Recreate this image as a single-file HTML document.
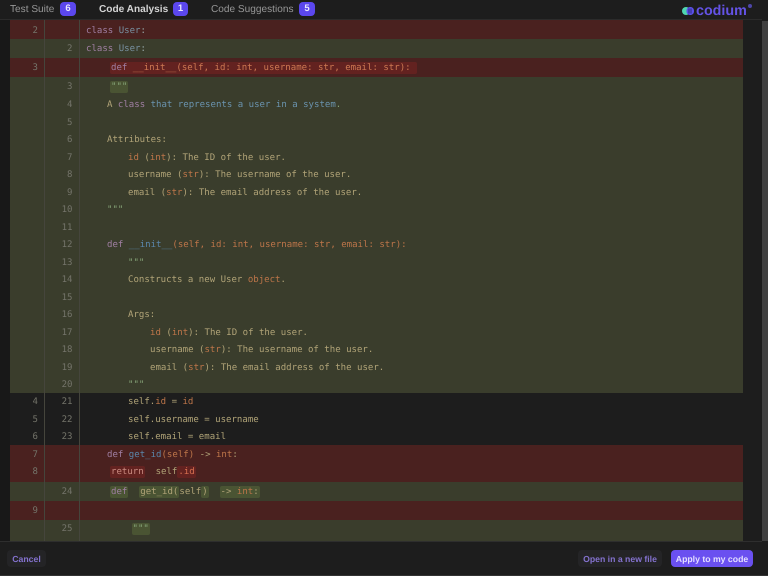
<!DOCTYPE html>
<html><head><meta charset="utf-8">
<style>
html,body{margin:0;padding:0;background:#1d1d1d;}
#p{position:relative;width:768px;height:576px;overflow:hidden;background:#1d1d1d;font-family:"Liberation Sans",sans-serif;filter:blur(.35px);text-rendering:geometricPrecision;}
.bg{position:absolute;left:10px;width:733px;}
.r{background:#4a211f}.g{background:#3a3d2c}
.l{position:absolute;left:0;margin-top:1px;height:18px;line-height:18px;font-family:"DejaVu Sans Mono",monospace;font-size:9.05px;color:#b0a377;white-space:pre;}
.n{color:#74746a;width:28px;text-align:right}
.a{left:10px}.b{left:44.5px}
.k{color:#a07fa3}.f{color:#5a86aa}.o{color:#bd7549}.w{color:#7890a0}.s{color:#86a478}.t{color:#6a93ae}
.hr{background:#632220;border-radius:2px;padding:1px;}
.hg{background:#4a5433;border-radius:2px;padding:1px;}
.tab{position:absolute;top:3px;font-size:10.1px;line-height:12px;color:#969696;white-space:nowrap}
.bd{position:absolute;top:2px;height:14px;background:#5b47ee;border-radius:4px;color:#e8e6ff;font-size:9.5px;font-weight:bold;line-height:14px;text-align:center}
.btn{position:absolute;top:550px;height:17px;line-height:18px;border-radius:4px;font-size:8.7px;text-align:center;font-weight:bold;white-space:nowrap}
</style></head><body><div id="p">

<div class="tab" style="left:10px;top:4px">Test Suite</div><div class="bd" style="left:60px;width:16px">6</div>
<div class="tab" style="left:99px;top:4px;color:#d4d4d4;font-weight:bold;">Code Analysis</div><div class="bd" style="left:173px;width:15px">1</div>
<div class="tab" style="left:211px;top:4px">Code Suggestions</div><div class="bd" style="left:299px;width:16px">5</div>
<div style="position:absolute;left:88px;top:18.5px;width:112px;height:1px;background:#5546c8"></div>
<div style="position:absolute;left:0;top:19px;width:762px;height:1px;background:#2b2b2b"></div>
<div style="position:absolute;left:0;top:20px;width:10px;height:521px;background:#181818"></div>

<svg style="position:absolute;left:682px;top:7px" width="13" height="9"><rect x="0" y="0" width="8" height="8" rx="4" fill="#4fd6b0"/><rect x="4.5" y="0" width="7.5" height="8" rx="3.5" fill="#5b50e8"/><rect x="6.5" y="1.5" width="1" height="5" fill="#2a2a7a"/><rect x="8.5" y="1.5" width="1" height="5" fill="#2a2a7a"/></svg>
<div style="position:absolute;left:696px;top:0.5px;font-size:14.3px;line-height:20px;font-weight:bold;color:#6453e6;">codium</div>
<div style="position:absolute;left:747.5px;top:3.5px;width:4px;height:4px;border-radius:50%;background:#4d46a8"></div>

<div style="position:absolute;left:762px;top:21px;width:6px;height:520px;background:#404040"></div>

<div class="bg r" style="top:20px;height:19px"></div>
<div class="bg g" style="top:39px;height:19px"></div>
<div class="bg r" style="top:58px;height:19px"></div>
<div class="bg g" style="top:77px;height:316px"></div>
<div class="bg r" style="top:445px;height:36.5px"></div>
<div class="bg g" style="top:481.5px;height:19px"></div>
<div class="bg r" style="top:500.5px;height:19px"></div>
<div class="bg g" style="top:519.5px;height:21.5px"></div>
<div style="position:absolute;left:44px;top:20px;width:1px;height:521px;background:#45453c"></div>
<div style="position:absolute;left:79px;top:20px;width:1px;height:521px;background:#45453c"></div>

<div class="l n a" style="top:21px">2</div><div class="l" style="left:86px;top:21px"><span class="k">class</span> <span class="w">User</span><span style="color:#9aa">:</span></div>
<div class="l n b" style="top:39px">2</div><div class="l" style="left:86px;top:39px"><span class="k">class</span> <span class="w">User</span><span style="color:#9aa">:</span></div>
<div class="l n a" style="top:58px">3</div><div class="l" style="left:110px;top:58px;color:#cc7852"><span class="hr" style="padding-right:6px"><span class="k">def</span> <span style="color:#cc7852">__init__</span>(self, id: int, username: str, email: str):</span></div>
<div class="l n b" style="top:77px">3</div><div class="l" style="left:110px;top:77px"><span class="hg s">"""</span></div>

<div class="l n b" style="top:95px">4</div><div class="l" style="left:107px;top:95px">A <span class="k">class</span> <span class="t">that represents a user in a system</span><span class="s">.</span></div>
<div class="l n b" style="top:113px">5</div>
<div class="l n b" style="top:130px">6</div><div class="l" style="left:107px;top:130px">Attributes:</div>
<div class="l n b" style="top:148px">7</div><div class="l" style="left:128px;top:148px"><span class="o">id</span> (<span class="o">int</span>): The ID of the user.</div>
<div class="l n b" style="top:165px">8</div><div class="l" style="left:128px;top:165px">username (<span class="o">str</span>): The username of the user.</div>
<div class="l n b" style="top:183px">9</div><div class="l" style="left:128px;top:183px">email (<span class="o">str</span>): The email address of the user.</div>
<div class="l n b" style="top:200px">10</div><div class="l s" style="left:107px;top:200px">"""</div>
<div class="l n b" style="top:218px">11</div>
<div class="l n b" style="top:235px">12</div><div class="l o" style="left:107px;top:235px"><span class="k">def</span> <span class="f">__init__</span>(self, id: int, username: str, email: str):</div>
<div class="l n b" style="top:253px">13</div><div class="l s" style="left:128px;top:253px">"""</div>
<div class="l n b" style="top:270px">14</div><div class="l" style="left:128px;top:270px">Constructs a new User <span class="o">object</span>.</div>
<div class="l n b" style="top:288px">15</div>
<div class="l n b" style="top:305px">16</div><div class="l" style="left:128px;top:305px">Args:</div>
<div class="l n b" style="top:323px">17</div><div class="l" style="left:150px;top:323px"><span class="o">id</span> (<span class="o">int</span>): The ID of the user.</div>
<div class="l n b" style="top:340px">18</div><div class="l" style="left:150px;top:340px">username (<span class="o">str</span>): The username of the user.</div>
<div class="l n b" style="top:358px">19</div><div class="l" style="left:150px;top:358px">email (<span class="o">str</span>): The email address of the user.</div>
<div class="l n b" style="top:375px">20</div><div class="l s" style="left:128px;top:375px">"""</div>
<div class="l n a" style="top:392px">4</div><div class="l n b" style="top:392px">21</div><div class="l" style="left:128px;top:392px">self.<span class="o">id</span> = <span class="o">id</span></div>
<div class="l n a" style="top:410px">5</div><div class="l n b" style="top:410px">22</div><div class="l" style="left:128px;top:410px">self.username = username</div>
<div class="l n a" style="top:427px">6</div><div class="l n b" style="top:427px">23</div><div class="l" style="left:128px;top:427px">self.email = email</div>
<div class="l n a" style="top:445px">7</div><div class="l" style="left:107px;top:445px"><span class="k">def</span> <span class="f">get_id</span><span class="o">(self)</span> -&gt; <span class="o">int</span>:</div>
<div class="l n a" style="top:462px">8</div><div class="l" style="left:110px;top:462px"><span class="hr" style="color:#c98a80">return</span>  self<span class="hr" style="color:#d87050">.id</span></div>
<div class="l n b" style="top:482px">24</div><div class="l" style="left:110px;top:482px"><span class="hg k">def</span>  <span class="hg">get_id(</span>self<span class="hg">)</span>  <span class="hg">-&gt; <span class="o">int</span>:</span></div>
<div class="l n a" style="top:501px">9</div>
<div class="l n b" style="top:519px">25</div><div class="l" style="left:131.5px;top:519px"><span class="hg s">"""</span></div>

<div style="position:absolute;left:0;top:541px;width:762px;height:1px;background:#2e2e2e"></div>
<div class="btn" style="left:7px;width:39px;background:#242426;color:#8472cf">Cancel</div>
<div class="btn" style="left:578px;width:84px;background:#242426;color:#8472cf">Open in a new file</div>
<div class="btn" style="left:671px;width:82px;background:#6a50f0;color:#e4dfff">Apply to my code</div>
<div style="position:absolute;left:0;top:575px;width:768px;height:1px;background:#333"></div>
</div></body></html>
